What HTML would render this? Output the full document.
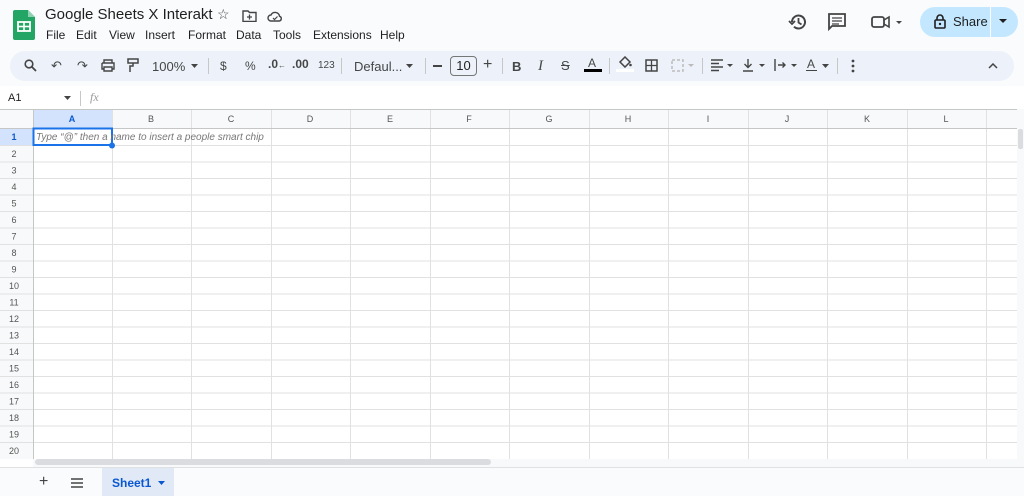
<!DOCTYPE html>
<html><head><meta charset="utf-8"><style>
*{margin:0;padding:0;box-sizing:border-box}
body{width:1024px;height:496px;overflow:hidden;background:#f9fbfd;font-family:"Liberation Sans",Arial,sans-serif;color:#444746;position:relative}
.a{position:absolute;white-space:nowrap}
.menu span{position:absolute;font-size:12px;color:#1f1f1f}
.tb{font-size:12px;color:#444746}
svg{position:absolute}
</style></head><body>
<svg style="left:13px;top:10px" width="22" height="30" viewBox="0 0 22 30"><path d="M2 0h13l7 7v21a2 2 0 0 1-2 2H2a2 2 0 0 1-2-2V2a2 2 0 0 1 2-2z" fill="#23a566"/><path d="M15 0v7h7z" fill="#8ed1b1"/><rect x="5" y="12" width="12" height="9" fill="none" stroke="#fff" stroke-width="1.8"/><line x1="5" y1="16.5" x2="17" y2="16.5" stroke="#fff" stroke-width="1.6"/><line x1="11" y1="12" x2="11" y2="21" stroke="#fff" stroke-width="1.6"/></svg>
<div class="a" style="left:45px;top:6px;font-size:15px;color:#1f1f1f">Google Sheets X Interakt</div>
<div class="a" style="left:217px;top:6px;font-size:14px">☆</div>
<svg style="left:242px;top:10px" width="15" height="12"><path d="M1 1h5l1.5 1.5H14v9H1z" fill="none" stroke="#444" stroke-width="1.4"/><path d="M7.5 4.5v5M5 7h5" stroke="#444" stroke-width="1.3"/></svg>
<svg style="left:267px;top:10px" width="16" height="12"><path d="M4 11a3 3 0 0 1 0-6 4.5 4.5 0 0 1 8.5 1.2A2.5 2.5 0 0 1 12.5 11z" fill="none" stroke="#444" stroke-width="1.4"/><path d="M6 8l1.5 1.5L10.5 6.5" fill="none" stroke="#444" stroke-width="1.2"/></svg>
<div class="a menu" style="left:0;top:28px"><span style="left:46px">File</span><span style="left:76px">Edit</span><span style="left:109px">View</span><span style="left:145px">Insert</span><span style="left:188px">Format</span><span style="left:236px">Data</span><span style="left:273px">Tools</span><span style="left:313px">Extensions</span><span style="left:380px">Help</span></div>
<svg style="left:788px;top:12px" width="20" height="20" viewBox="0 0 20 20"><path d="M4 10a6.5 6.5 0 1 1 2 4.7" fill="none" stroke="#444" stroke-width="2"/><path d="M1 9l3 3 3-3" fill="none" stroke="#444" stroke-width="1.8"/><path d="M10.5 6v4.5l3 2" fill="none" stroke="#444" stroke-width="1.8"/></svg>
<svg style="left:828px;top:13px" width="18" height="18" viewBox="0 0 18 18"><path d="M1 1h16v12H4l-3 3z" fill="none" stroke="#444" stroke-width="1.8"/><path d="M4 5h10M4 8h10M4 11h7" stroke="#444" stroke-width="1.3"/></svg>
<svg style="left:871px;top:15px" width="34" height="14" viewBox="0 0 34 14"><rect x="1" y="2" width="12" height="10" rx="2" fill="none" stroke="#444" stroke-width="1.8"/><path d="M13 5l5-3v10l-5-3" fill="none" stroke="#444" stroke-width="1.6"/><path d="M25 6h6l-3 3z" fill="#444"/></svg>
<div class="a" style="left:920px;top:7px;width:98px;height:30px;border-radius:15px;background:#c2e7ff"></div>
<div class="a" style="left:990px;top:7px;width:1px;height:30px;background:#f9fbfd"></div>
<svg style="left:934px;top:14px" width="12" height="15" viewBox="0 0 12 15"><rect x="1" y="6" width="10" height="8" rx="1" fill="none" stroke="#1f1f1f" stroke-width="1.6"/><path d="M3 6V4a3 3 0 0 1 6 0v2" fill="none" stroke="#1f1f1f" stroke-width="1.6"/><circle cx="6" cy="10" r="1.2" fill="#1f1f1f"/></svg>
<div class="a" style="left:953px;top:14px;font-size:13px;color:#1f1f1f">Share</div>
<svg style="left:999px;top:19px" width="9" height="6"><path d="M0 0h8l-4 4z" fill="#1f1f1f"/></svg>
<div class="a" style="left:10px;top:51px;width:1004px;height:30px;border-radius:15px;background:#edf2fa"></div>
<svg style="left:24px;top:59px" width="13" height="13"><circle cx="5" cy="5" r="3.8" fill="none" stroke="#444" stroke-width="1.6"/><path d="M8 8l4 4" stroke="#444" stroke-width="1.8"/></svg>
<div class="a tb" style="left:51px;top:58px;font-size:13px">↶</div>
<div class="a tb" style="left:77px;top:58px;font-size:13px">↷</div>
<svg style="left:101px;top:59px" width="14" height="13"><path d="M3 4V1h8v3M1 4h12v6h-2M3 10H1V4M3 8h8v4H3z" fill="none" stroke="#444" stroke-width="1.4"/></svg>
<svg style="left:127px;top:58px" width="12" height="15"><path d="M1 1h10v4H1zM6 5v3H3v6" fill="none" stroke="#444" stroke-width="1.5"/></svg>
<div class="a tb" style="left:152px;top:59px;font-size:13px">100%</div>
<svg style="left:191px;top:64px" width="8" height="5"><path d="M0 0h7l-3.5 4z" fill="#444"/></svg>
<div class="a" style="left:208px;top:58px;width:1px;height:16px;background:#c7c7c7"></div>
<div class="a tb" style="left:220px;top:59px">$</div>
<div class="a tb" style="left:245px;top:59px">%</div>
<div class="a tb" style="left:268px;top:57px;font-weight:bold">.0<span style="font-size:8px">←</span></div>
<div class="a tb" style="left:292px;top:57px;font-weight:bold">.00</div>
<div class="a tb" style="left:318px;top:60px;font-size:10px">123</div>
<div class="a" style="left:341px;top:58px;width:1px;height:16px;background:#c7c7c7"></div>
<div class="a tb" style="left:354px;top:59px;font-size:13px">Defaul...</div>
<svg style="left:406px;top:64px" width="8" height="5"><path d="M0 0h7l-3.5 4z" fill="#444"/></svg>
<div class="a" style="left:425px;top:58px;width:1px;height:16px;background:#c7c7c7"></div>
<div class="a" style="left:433px;top:65px;width:9px;height:1.5px;background:#444"></div>
<div class="a" style="left:450px;top:56px;width:27px;height:20px;border:1px solid #747775;border-radius:4px;font-size:13px;text-align:center;line-height:18px;color:#1f1f1f">10</div>
<div class="a tb" style="left:483px;top:56px;font-size:16px">+</div>
<div class="a" style="left:502px;top:58px;width:1px;height:16px;background:#c7c7c7"></div>
<div class="a tb" style="left:512px;top:59px;font-weight:bold;font-size:13px">B</div>
<div class="a tb" style="left:538px;top:58px;font-style:italic;font-family:'Liberation Serif';font-size:15px">I</div>
<div class="a tb" style="left:561px;top:58px;font-size:13px;text-decoration:line-through">S</div>
<div class="a tb" style="left:588px;top:56px;font-size:12px">A</div>
<div class="a" style="left:584px;top:69px;width:18px;height:3px;background:#000"></div>
<div class="a" style="left:609px;top:58px;width:1px;height:16px;background:#c7c7c7"></div>
<svg style="left:618px;top:56px" width="14" height="12"><path d="M2 6l5-5 5 5-5 5z" fill="none" stroke="#444" stroke-width="1.5"/><circle cx="12.5" cy="9" r="1.3" fill="#444"/></svg>
<div class="a" style="left:616px;top:69px;width:18px;height:3px;background:#fff"></div>
<svg style="left:645px;top:59px" width="13" height="13"><rect x="1" y="1" width="11" height="11" fill="none" stroke="#444" stroke-width="1.5"/><path d="M6.5 1v11M1 6.5h11" stroke="#444" stroke-width="1.3"/></svg>
<svg style="left:671px;top:59px" width="25" height="13"><rect x="1" y="1" width="11" height="11" fill="none" stroke="#bbb" stroke-width="1.5" stroke-dasharray="3 2"/><path d="M17 5h6l-3 3z" fill="#bbb"/></svg>
<div class="a" style="left:702px;top:58px;width:1px;height:16px;background:#c7c7c7"></div>
<svg style="left:710px;top:59px" width="26" height="13"><path d="M1 1h12M1 4.5h8M1 8h12M1 11.5h8" stroke="#444" stroke-width="1.4"/><path d="M17 5h6l-3 3z" fill="#444"/></svg>
<svg style="left:742px;top:58px" width="26" height="14"><path d="M6 1v8M2.5 6L6 9.5 9.5 6M1 13h10" fill="none" stroke="#444" stroke-width="1.4"/><path d="M17 6h6l-3 3z" fill="#444"/></svg>
<svg style="left:774px;top:58px" width="26" height="14"><path d="M1 1v12M4 7h7M8.5 4.5L11 7 8.5 9.5" fill="none" stroke="#444" stroke-width="1.4"/><path d="M17 6h6l-3 3z" fill="#444"/></svg>
<div class="a tb" style="left:807px;top:57px;font-size:12px">A</div>
<div class="a" style="left:806px;top:70px;width:11px;height:1.3px;background:#444"></div>
<svg style="left:822px;top:64px" width="8" height="5"><path d="M0 0h7l-3.5 4z" fill="#444"/></svg>
<div class="a" style="left:837px;top:58px;width:1px;height:16px;background:#c7c7c7"></div>
<svg style="left:851px;top:59px" width="4" height="14"><circle cx="2" cy="2" r="1.4" fill="#444"/><circle cx="2" cy="7" r="1.4" fill="#444"/><circle cx="2" cy="12" r="1.4" fill="#444"/></svg>
<svg style="left:988px;top:63px" width="10" height="6"><path d="M1 5l4-4 4 4" fill="none" stroke="#444" stroke-width="1.5"/></svg>
<div class="a" style="left:0;top:86px;width:1024px;height:24px;background:#fff"></div>
<div class="a" style="left:8px;top:92px;font-size:11px;color:#1f1f1f">A1</div>
<svg style="left:64px;top:96px" width="8" height="5"><path d="M0 0h7l-3.5 4z" fill="#444"/></svg>
<div class="a" style="left:80px;top:91px;width:1px;height:15px;background:#c7c7c7"></div>
<div class="a" style="left:90px;top:90px;font-size:12px;font-style:italic;font-family:'Liberation Serif';color:#999">fx</div>
<div class="a" style="left:0;top:109px;width:1024px;height:358px;background:#fff"></div>
<svg style="left:0;top:109px" width="1024" height="358" viewBox="0 0 1024 358">
<rect x="0" y="0" width="1017" height="19" fill="#f8f9fa"/>
<rect x="0" y="0" width="33" height="350" fill="#f8f9fa"/>
<rect x="33" y="1" width="79" height="18" fill="#d3e3fd"/>
<rect x="0" y="19" width="33" height="17" fill="#d3e3fd"/>
<g stroke="#e1e1e1" stroke-width="1">
<path d="M33.5 19V350M112.5 0V350M191.5 0V350M271.5 0V350M350.5 0V350M430.5 0V350M509.5 0V350M589.5 0V350M668.5 0V350M748.5 0V350M827.5 0V350M907.5 0V350M986.5 0V350"/>
<path d="M0 36.5H1017M0 53H1017M0 69.5H1017M0 86H1017M0 102.5H1017M0 119H1017M0 135.5H1017M0 152H1017M0 168.5H1017M0 185H1017M0 201.5H1017M0 218H1017M0 234.5H1017M0 251H1017M0 267.5H1017M0 284H1017M0 300.5H1017M0 317H1017M0 333.5H1017"/>
</g>
<path d="M0 0.5H1017M0 19.5H1017M33.5 0V350" stroke="#c4c7c5"/>
<rect x="33.5" y="19.5" width="78.5" height="16.5" fill="none" stroke="#1a73e8" stroke-width="2"/>
<circle cx="112" cy="36.5" r="3" fill="#1a73e8"/>
<rect x="1017" y="0" width="7" height="358" fill="#f8f9fa"/>
<rect x="1018" y="20" width="5" height="20" rx="2" fill="#dadce0"/>
<rect x="33" y="350" width="984" height="8" fill="#f8f9fa"/>
<rect x="35" y="350" width="456" height="6" rx="3" fill="#dadce0"/>
<g font-size="9" fill="#555" text-anchor="middle" font-family="Liberation Sans">
<text x="72" y="13" font-weight="bold" fill="#0b57d0">A</text><text x="151" y="13">B</text><text x="231" y="13">C</text><text x="310" y="13">D</text><text x="390" y="13">E</text><text x="469" y="13">F</text><text x="549" y="13">G</text><text x="628" y="13">H</text><text x="708" y="13">I</text><text x="787" y="13">J</text><text x="867" y="13">K</text><text x="946" y="13">L</text>
<text x="14" y="31" font-weight="bold" fill="#0b57d0">1</text>
<text x="14" y="48">2</text><text x="14" y="64.5">3</text><text x="14" y="81">4</text><text x="14" y="97.5">5</text><text x="14" y="114">6</text><text x="14" y="130.5">7</text><text x="14" y="147">8</text><text x="14" y="163.5">9</text><text x="14" y="180">10</text><text x="14" y="196.5">11</text><text x="14" y="213">12</text><text x="14" y="229.5">13</text><text x="14" y="246">14</text><text x="14" y="262.5">15</text><text x="14" y="279">16</text><text x="14" y="295.5">17</text><text x="14" y="312">18</text><text x="14" y="328.5">19</text><text x="14" y="345">20</text>
</g>
<text x="36" y="31" font-size="10" font-style="italic" fill="#777" font-family="Liberation Sans">Type “@” then a name to insert a people smart chip</text>
</svg>
<div class="a" style="left:0;top:467px;width:1024px;height:1px;background:#e1e1e1"></div>
<div class="a" style="left:39px;top:473px;font-size:16px;color:#444">+</div>
<svg style="left:71px;top:478px" width="12" height="10"><path d="M0 1h12M0 5h12M0 9h12" stroke="#444" stroke-width="1.4"/></svg>
<div class="a" style="left:102px;top:468px;width:72px;height:28px;background:#e1e9f7"></div>
<div class="a" style="left:112px;top:476px;font-size:12px;font-weight:bold;color:#0b57d0">Sheet1</div>
<svg style="left:158px;top:481px" width="8" height="5"><path d="M0 0h7l-3.5 4z" fill="#0b57d0"/></svg>
</body></html>
